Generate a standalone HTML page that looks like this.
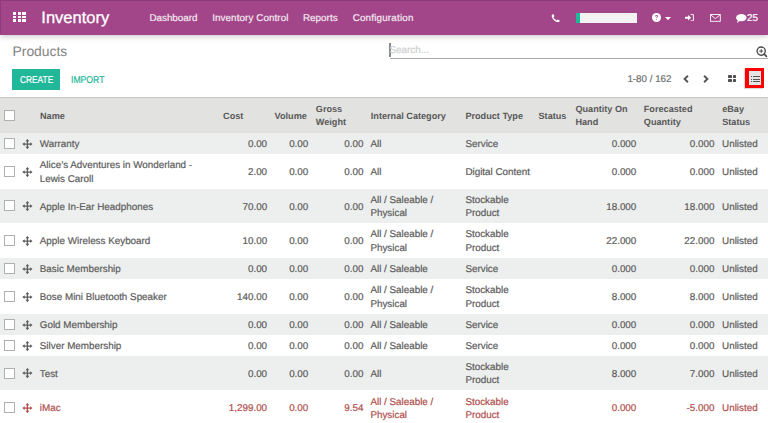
<!DOCTYPE html>
<html><head><meta charset="utf-8"><style>
html,body{margin:0;padding:0;}
body{width:768px;height:423px;overflow:hidden;position:relative;background:#fff;font-family:"Liberation Sans", sans-serif;}
.t{position:absolute;white-space:nowrap;line-height:normal;text-rendering:geometricPrecision;-webkit-text-stroke:0.2px currentColor;}
.r{position:absolute;}
.cb{width:9px;height:9px;border:1px solid #b0b0b0;background:#fff;}
</style></head><body>
<div class="r" style="left:0px;top:0px;width:768.00px;height:34.60px;background:#a24689;box-shadow:0 1px 6px rgba(0,0,0,0.24);"></div>
<div class="r" style="left:0px;top:0px;width:768.00px;height:1.00px;background:#8e3b78;"></div>
<div class="r" style="left:0px;top:0px;width:1.00px;height:34.00px;background:#8e3b78;"></div>
<div class="r" style="left:12.8px;top:11.8px;width:3.70px;height:2.90px;background:#fff;"></div>
<div class="r" style="left:12.8px;top:15.5px;width:3.70px;height:2.90px;background:#fff;"></div>
<div class="r" style="left:12.8px;top:19.2px;width:3.70px;height:2.90px;background:#fff;"></div>
<div class="r" style="left:17.6px;top:11.8px;width:3.70px;height:2.90px;background:#fff;"></div>
<div class="r" style="left:17.6px;top:15.5px;width:3.70px;height:2.90px;background:#fff;"></div>
<div class="r" style="left:17.6px;top:19.2px;width:3.70px;height:2.90px;background:#fff;"></div>
<div class="r" style="left:22.4px;top:11.8px;width:3.70px;height:2.90px;background:#fff;"></div>
<div class="r" style="left:22.4px;top:15.5px;width:3.70px;height:2.90px;background:#fff;"></div>
<div class="r" style="left:22.4px;top:19.2px;width:3.70px;height:2.90px;background:#fff;"></div>
<div class="t" style="left:41.30px;top:9px;font-size:16.5px;color:#fff;-webkit-text-stroke:0.3px #fff;">Inventory</div>
<div class="t" style="left:149.50px;top:13px;font-size:9.8px;color:#f4e8f1;letter-spacing:-0.01px;">Dashboard</div>
<div class="t" style="left:212.20px;top:13px;font-size:9.8px;color:#f4e8f1;letter-spacing:0.1px;">Inventory Control</div>
<div class="t" style="left:303.00px;top:13px;font-size:9.8px;color:#f4e8f1;letter-spacing:0.05px;">Reports</div>
<div class="t" style="left:352.70px;top:13px;font-size:9.8px;color:#f4e8f1;letter-spacing:0.2px;">Configuration</div>
<svg class="r" style="left:551px;top:14px;" width="9" height="8.5" viewBox="0 0 16 16"><path fill="#fff" d="M15.6 12.3c-.1-.4-2.6-1.9-3-2-.4-.1-.8 0-1.1.3l-.9 1.1c-.3.3-.7.3-1 .1C8 11 5.1 8.1 4.3 6.5c-.2-.3-.1-.7.1-1L5.5 4.6c.3-.3.4-.7.3-1.1C5.7 3.1 4.2.6 3.8.5 3.3.3 2.2.6 1.9.9 1.1 1.7.1 3.6 1.7 7c1.6 3.3 4.3 6 7.6 7.4 3.4 1.5 5.3.6 6.1-.3.3-.3.4-1.4.2-1.8z"/></svg>
<div class="r" style="left:576.3px;top:13px;width:3.50px;height:10.00px;background:#21b799;"></div>
<div class="r" style="left:579.8px;top:13px;width:57.20px;height:10.00px;background:#f2f2f2;"></div>
<svg class="r" style="left:651.8px;top:13.3px;" width="9" height="9" viewBox="0 0 16 16"><circle cx="8" cy="8" r="8" fill="#fff"/><path fill="#a24689" d="M5.6 6.1c0-1.5 1.1-2.4 2.5-2.4 1.5 0 2.5.9 2.5 2.1 0 1-.6 1.5-1.2 1.9-.5.3-.6.5-.6.9v.3H7.4v-.4c0-.8.3-1.2.9-1.6.5-.3.8-.5.8-1 0-.5-.4-.8-.9-.8-.6 0-1 .4-1 1H5.6zM7.3 10.6h1.6v1.6H7.3z"/></svg>
<svg class="r" style="left:664.8px;top:16.9px;" width="6" height="3.2" viewBox="0 0 6 3.2"><path fill="#fff" d="M0 0h6L3 3.2z"/></svg>
<svg class="r" style="left:685.2px;top:13.8px;" width="9.2" height="7.4" viewBox="0 0 18 14"><path fill="#fff" d="M0 5h6V1.5L12 7l-6 5.5V9H0z"/><path fill="none" stroke="#fff" stroke-width="1.8" d="M11 .9h5.5v12.2H11"/></svg>
<svg class="r" style="left:709.9px;top:14.2px;" width="10.8" height="7.8" viewBox="0 0 22 16"><rect x="1" y="1" width="20" height="14" fill="none" stroke="#fff" stroke-width="1.8"/><path d="M1.5 2L11 9.5 20.5 2" fill="none" stroke="#fff" stroke-width="1.8"/></svg>
<svg class="r" style="left:736.4px;top:13.6px;" width="10.6" height="9.2" viewBox="0 0 20 17"><ellipse cx="10" cy="6.7" rx="10" ry="6.7" fill="#fff"/><path fill="#fff" d="M3.5 10.5L2 17l6-5z"/></svg>
<div class="t" style="left:747.00px;top:13px;font-size:9.9px;color:#fff;">25</div>
<div class="t" style="left:12.50px;top:43px;font-size:13.9px;color:#838383;-webkit-text-stroke:0;">Products</div>
<div class="r" style="left:389px;top:43px;width:2.00px;height:13.50px;background:#8a8a8a;"></div>
<div class="t" style="left:389.50px;top:45px;font-size:9.9px;color:#cfcfcf;">Search...</div>
<div class="r" style="left:389.5px;top:58px;width:378.00px;height:1.00px;background:#a8a8a8;"></div>
<svg class="r" style="left:755.5px;top:45.5px;" width="12.5" height="12.5" viewBox="0 0 25 25"><circle cx="10.4" cy="10.2" r="8.2" fill="none" stroke="#484848" stroke-width="2.7"/><path d="M16.2 16L20.9 20.7" stroke="#484848" stroke-width="3.4" stroke-linecap="round"/><path d="M10.4 6.3v7.8M6.5 10.2h7.8" stroke="#484848" stroke-width="1.9"/></svg>
<div class="r" style="left:12px;top:68.5px;width:48.00px;height:21.00px;background:#21b799;"></div>
<div class="t" style="left:19.6px;top:75px;font-size:9.9px;color:#fff;transform:scaleX(0.845);transform-origin:0 0;">CREATE</div>
<div class="t" style="left:70.8px;top:75px;font-size:9.9px;color:#21b799;transform:scaleX(0.875);transform-origin:0 0;">IMPORT</div>
<div class="t" style="left:627.40px;top:74px;font-size:9.8px;color:#707070;">1-80 / 162</div>
<svg class="r" style="left:682.5px;top:74.8px;" width="6" height="8" viewBox="0 0 6 8"><path d="M4.9 .8L1.6 4l3.3 3.2" fill="none" stroke="#555" stroke-width="1.9"/></svg>
<svg class="r" style="left:702.5px;top:74.8px;" width="6" height="8" viewBox="0 0 6 8"><path d="M1.1 .8L4.4 4 1.1 7.2" fill="none" stroke="#555" stroke-width="1.9"/></svg>
<div class="r" style="left:727.7px;top:75px;width:3.90px;height:3.20px;background:#505050;border-radius:0.4px;"></div>
<div class="r" style="left:727.7px;top:78.9px;width:3.90px;height:3.20px;background:#505050;border-radius:0.4px;"></div>
<div class="r" style="left:732.6px;top:75px;width:3.90px;height:3.20px;background:#505050;border-radius:0.4px;"></div>
<div class="r" style="left:732.6px;top:78.9px;width:3.90px;height:3.20px;background:#505050;border-radius:0.4px;"></div>
<div class="r" style="left:745.2px;top:67.8px;width:19.20px;height:20.20px;background:#ff0000;box-shadow:-1px 1px 1px rgba(0,0,0,0.15);"></div>
<div class="r" style="left:749px;top:71.1px;width:12.00px;height:13.50px;background:#e4e4e4;"></div>
<div class="r" style="left:750.5px;top:75.6px;width:1.50px;height:1.20px;background:#555;"></div>
<div class="r" style="left:753px;top:75.6px;width:6.80px;height:1.20px;background:#555;"></div>
<div class="r" style="left:750.5px;top:78.5px;width:1.50px;height:1.20px;background:#555;"></div>
<div class="r" style="left:753px;top:78.5px;width:6.80px;height:1.20px;background:#555;"></div>
<div class="r" style="left:750.5px;top:81.3px;width:1.50px;height:1.20px;background:#555;"></div>
<div class="r" style="left:753px;top:81.3px;width:6.80px;height:1.20px;background:#555;"></div>
<div class="r" style="left:0px;top:97px;width:768.00px;height:1.00px;background:#c8c8c8;"></div>
<div class="r" style="left:0px;top:98px;width:768.00px;height:35.00px;background:#e2e2e0;"></div>
<div class="r cb" style="left:4px;top:110.00px"></div>
<div class="t" style="left:40.00px;top:111px;font-size:9.15px;color:#585858;font-weight:700;-webkit-text-stroke:0;">Name</div>
<div class="t" style="left:223.10px;top:111px;font-size:9.15px;color:#585858;font-weight:700;-webkit-text-stroke:0;">Cost</div>
<div class="t" style="left:274.60px;top:111px;font-size:9.15px;color:#585858;font-weight:700;-webkit-text-stroke:0;">Volume</div>
<div class="t" style="left:315.80px;top:104px;font-size:9.15px;color:#585858;font-weight:700;-webkit-text-stroke:0;">Gross</div>
<div class="t" style="left:315.80px;top:117px;font-size:9.15px;color:#585858;font-weight:700;-webkit-text-stroke:0;">Weight</div>
<div class="t" style="left:370.80px;top:111px;font-size:9.15px;color:#585858;font-weight:700;-webkit-text-stroke:0;">Internal Category</div>
<div class="t" style="left:465.40px;top:111px;font-size:9.15px;color:#585858;font-weight:700;-webkit-text-stroke:0;">Product Type</div>
<div class="t" style="left:538.50px;top:111px;font-size:9.15px;color:#585858;font-weight:700;-webkit-text-stroke:0;">Status</div>
<div class="t" style="left:575.40px;top:104px;font-size:9.15px;color:#585858;font-weight:700;-webkit-text-stroke:0;">Quantity On</div>
<div class="t" style="left:575.40px;top:117px;font-size:9.15px;color:#585858;font-weight:700;-webkit-text-stroke:0;">Hand</div>
<div class="t" style="left:643.80px;top:104px;font-size:9.15px;color:#585858;font-weight:700;-webkit-text-stroke:0;">Forecasted</div>
<div class="t" style="left:643.80px;top:117px;font-size:9.15px;color:#585858;font-weight:700;-webkit-text-stroke:0;">Quantity</div>
<div class="t" style="left:722.20px;top:104px;font-size:9.15px;color:#585858;font-weight:700;-webkit-text-stroke:0;">eBay</div>
<div class="t" style="left:722.20px;top:117px;font-size:9.15px;color:#585858;font-weight:700;-webkit-text-stroke:0;">Status</div>
<div class="r" style="left:0px;top:133px;width:768.00px;height:20.90px;background:#edefee;"></div>
<div class="r cb" style="left:4px;top:138.00px"></div>
<svg class="r" style="left:22.0px;top:138.8px;" width="10.8" height="10.2" viewBox="0 0 20 20"><path fill="#5c5c5c" d="M10 0L13.8 4.6H11.3V8.7H15.4V6.2L20 10 15.4 13.8V11.3H11.3V15.4H13.8L10 20 6.2 15.4H8.7V11.3H4.6V13.8L0 10 4.6 6.2V8.7H8.7V4.6H6.2z"/></svg>
<div class="t" style="left:39.80px;top:139px;font-size:9.85px;color:#5c5c5c;">Warranty</div>
<div class="t" style="right:500.90px;top:139px;font-size:9.85px;color:#5c5c5c;">0.00</div>
<div class="t" style="right:459.70px;top:139px;font-size:9.85px;color:#5c5c5c;">0.00</div>
<div class="t" style="right:404.50px;top:139px;font-size:9.85px;color:#5c5c5c;">0.00</div>
<div class="t" style="left:370.40px;top:139px;font-size:9.85px;color:#5c5c5c;">All</div>
<div class="t" style="left:465.40px;top:139px;font-size:9.85px;color:#5c5c5c;">Service</div>
<div class="t" style="right:131.70px;top:139px;font-size:9.85px;color:#5c5c5c;">0.000</div>
<div class="t" style="right:53.60px;top:139px;font-size:9.85px;color:#5c5c5c;">0.000</div>
<div class="t" style="left:722.10px;top:139px;font-size:9.85px;color:#5c5c5c;">Unlisted</div>
<div class="r cb" style="left:4px;top:166.00px"></div>
<svg class="r" style="left:22.0px;top:166.7px;" width="10.8" height="10.2" viewBox="0 0 20 20"><path fill="#5c5c5c" d="M10 0L13.8 4.6H11.3V8.7H15.4V6.2L20 10 15.4 13.8V11.3H11.3V15.4H13.8L10 20 6.2 15.4H8.7V11.3H4.6V13.8L0 10 4.6 6.2V8.7H8.7V4.6H6.2z"/></svg>
<div class="t" style="left:39.80px;top:160px;font-size:9.85px;color:#5c5c5c;">Alice’s Adventures in Wonderland -</div>
<div class="t" style="left:39.80px;top:174px;font-size:9.85px;color:#5c5c5c;">Lewis Caroll</div>
<div class="t" style="right:500.90px;top:167px;font-size:9.85px;color:#5c5c5c;">2.00</div>
<div class="t" style="right:459.70px;top:167px;font-size:9.85px;color:#5c5c5c;">0.00</div>
<div class="t" style="right:404.50px;top:167px;font-size:9.85px;color:#5c5c5c;">0.00</div>
<div class="t" style="left:370.40px;top:167px;font-size:9.85px;color:#5c5c5c;">All</div>
<div class="t" style="left:465.40px;top:167px;font-size:9.85px;color:#5c5c5c;">Digital Content</div>
<div class="t" style="right:131.70px;top:167px;font-size:9.85px;color:#5c5c5c;">0.000</div>
<div class="t" style="right:53.60px;top:167px;font-size:9.85px;color:#5c5c5c;">0.000</div>
<div class="t" style="left:722.10px;top:167px;font-size:9.85px;color:#5c5c5c;">Unlisted</div>
<div class="r" style="left:0px;top:188.6px;width:768.00px;height:34.40px;background:#edefee;"></div>
<div class="r cb" style="left:4px;top:200.00px"></div>
<svg class="r" style="left:22.0px;top:201.2px;" width="10.8" height="10.2" viewBox="0 0 20 20"><path fill="#5c5c5c" d="M10 0L13.8 4.6H11.3V8.7H15.4V6.2L20 10 15.4 13.8V11.3H11.3V15.4H13.8L10 20 6.2 15.4H8.7V11.3H4.6V13.8L0 10 4.6 6.2V8.7H8.7V4.6H6.2z"/></svg>
<div class="t" style="left:39.80px;top:202px;font-size:9.85px;color:#5c5c5c;">Apple In-Ear Headphones</div>
<div class="t" style="right:500.90px;top:202px;font-size:9.85px;color:#5c5c5c;">70.00</div>
<div class="t" style="right:459.70px;top:202px;font-size:9.85px;color:#5c5c5c;">0.00</div>
<div class="t" style="right:404.50px;top:202px;font-size:9.85px;color:#5c5c5c;">0.00</div>
<div class="t" style="left:370.40px;top:195px;font-size:9.85px;color:#5c5c5c;">All / Saleable /</div>
<div class="t" style="left:370.40px;top:208px;font-size:9.85px;color:#5c5c5c;">Physical</div>
<div class="t" style="left:465.40px;top:195px;font-size:9.85px;color:#5c5c5c;">Stockable</div>
<div class="t" style="left:465.40px;top:208px;font-size:9.85px;color:#5c5c5c;">Product</div>
<div class="t" style="right:131.70px;top:202px;font-size:9.85px;color:#5c5c5c;">18.000</div>
<div class="t" style="right:53.60px;top:202px;font-size:9.85px;color:#5c5c5c;">18.000</div>
<div class="t" style="left:722.10px;top:202px;font-size:9.85px;color:#5c5c5c;">Unlisted</div>
<div class="r cb" style="left:4px;top:235.00px"></div>
<svg class="r" style="left:22.0px;top:235.8px;" width="10.8" height="10.2" viewBox="0 0 20 20"><path fill="#5c5c5c" d="M10 0L13.8 4.6H11.3V8.7H15.4V6.2L20 10 15.4 13.8V11.3H11.3V15.4H13.8L10 20 6.2 15.4H8.7V11.3H4.6V13.8L0 10 4.6 6.2V8.7H8.7V4.6H6.2z"/></svg>
<div class="t" style="left:39.80px;top:236px;font-size:9.85px;color:#5c5c5c;">Apple Wireless Keyboard</div>
<div class="t" style="right:500.90px;top:236px;font-size:9.85px;color:#5c5c5c;">10.00</div>
<div class="t" style="right:459.70px;top:236px;font-size:9.85px;color:#5c5c5c;">0.00</div>
<div class="t" style="right:404.50px;top:236px;font-size:9.85px;color:#5c5c5c;">0.00</div>
<div class="t" style="left:370.40px;top:229px;font-size:9.85px;color:#5c5c5c;">All / Saleable /</div>
<div class="t" style="left:370.40px;top:243px;font-size:9.85px;color:#5c5c5c;">Physical</div>
<div class="t" style="left:465.40px;top:229px;font-size:9.85px;color:#5c5c5c;">Stockable</div>
<div class="t" style="left:465.40px;top:243px;font-size:9.85px;color:#5c5c5c;">Product</div>
<div class="t" style="right:131.70px;top:236px;font-size:9.85px;color:#5c5c5c;">22.000</div>
<div class="t" style="right:53.60px;top:236px;font-size:9.85px;color:#5c5c5c;">22.000</div>
<div class="t" style="left:722.10px;top:236px;font-size:9.85px;color:#5c5c5c;">Unlisted</div>
<div class="r" style="left:0px;top:257.7px;width:768.00px;height:21.10px;background:#edefee;"></div>
<div class="r cb" style="left:4px;top:263.00px"></div>
<svg class="r" style="left:22.0px;top:263.6px;" width="10.8" height="10.2" viewBox="0 0 20 20"><path fill="#5c5c5c" d="M10 0L13.8 4.6H11.3V8.7H15.4V6.2L20 10 15.4 13.8V11.3H11.3V15.4H13.8L10 20 6.2 15.4H8.7V11.3H4.6V13.8L0 10 4.6 6.2V8.7H8.7V4.6H6.2z"/></svg>
<div class="t" style="left:39.80px;top:264px;font-size:9.85px;color:#5c5c5c;">Basic Membership</div>
<div class="t" style="right:500.90px;top:264px;font-size:9.85px;color:#5c5c5c;">0.00</div>
<div class="t" style="right:459.70px;top:264px;font-size:9.85px;color:#5c5c5c;">0.00</div>
<div class="t" style="right:404.50px;top:264px;font-size:9.85px;color:#5c5c5c;">0.00</div>
<div class="t" style="left:370.40px;top:264px;font-size:9.85px;color:#5c5c5c;">All / Saleable</div>
<div class="t" style="left:465.40px;top:264px;font-size:9.85px;color:#5c5c5c;">Service</div>
<div class="t" style="right:131.70px;top:264px;font-size:9.85px;color:#5c5c5c;">0.000</div>
<div class="t" style="right:53.60px;top:264px;font-size:9.85px;color:#5c5c5c;">0.000</div>
<div class="t" style="left:722.10px;top:264px;font-size:9.85px;color:#5c5c5c;">Unlisted</div>
<div class="r cb" style="left:4px;top:291.00px"></div>
<svg class="r" style="left:22.0px;top:291.6px;" width="10.8" height="10.2" viewBox="0 0 20 20"><path fill="#5c5c5c" d="M10 0L13.8 4.6H11.3V8.7H15.4V6.2L20 10 15.4 13.8V11.3H11.3V15.4H13.8L10 20 6.2 15.4H8.7V11.3H4.6V13.8L0 10 4.6 6.2V8.7H8.7V4.6H6.2z"/></svg>
<div class="t" style="left:39.80px;top:292px;font-size:9.85px;color:#5c5c5c;">Bose Mini Bluetooth Speaker</div>
<div class="t" style="right:500.90px;top:292px;font-size:9.85px;color:#5c5c5c;">140.00</div>
<div class="t" style="right:459.70px;top:292px;font-size:9.85px;color:#5c5c5c;">0.00</div>
<div class="t" style="right:404.50px;top:292px;font-size:9.85px;color:#5c5c5c;">0.00</div>
<div class="t" style="left:370.40px;top:285px;font-size:9.85px;color:#5c5c5c;">All / Saleable /</div>
<div class="t" style="left:370.40px;top:299px;font-size:9.85px;color:#5c5c5c;">Physical</div>
<div class="t" style="left:465.40px;top:285px;font-size:9.85px;color:#5c5c5c;">Stockable</div>
<div class="t" style="left:465.40px;top:299px;font-size:9.85px;color:#5c5c5c;">Product</div>
<div class="t" style="right:131.70px;top:292px;font-size:9.85px;color:#5c5c5c;">8.000</div>
<div class="t" style="right:53.60px;top:292px;font-size:9.85px;color:#5c5c5c;">8.000</div>
<div class="t" style="left:722.10px;top:292px;font-size:9.85px;color:#5c5c5c;">Unlisted</div>
<div class="r" style="left:0px;top:313.6px;width:768.00px;height:21.10px;background:#edefee;"></div>
<div class="r cb" style="left:4px;top:319.00px"></div>
<svg class="r" style="left:22.0px;top:319.5px;" width="10.8" height="10.2" viewBox="0 0 20 20"><path fill="#5c5c5c" d="M10 0L13.8 4.6H11.3V8.7H15.4V6.2L20 10 15.4 13.8V11.3H11.3V15.4H13.8L10 20 6.2 15.4H8.7V11.3H4.6V13.8L0 10 4.6 6.2V8.7H8.7V4.6H6.2z"/></svg>
<div class="t" style="left:39.80px;top:320px;font-size:9.85px;color:#5c5c5c;">Gold Membership</div>
<div class="t" style="right:500.90px;top:320px;font-size:9.85px;color:#5c5c5c;">0.00</div>
<div class="t" style="right:459.70px;top:320px;font-size:9.85px;color:#5c5c5c;">0.00</div>
<div class="t" style="right:404.50px;top:320px;font-size:9.85px;color:#5c5c5c;">0.00</div>
<div class="t" style="left:370.40px;top:320px;font-size:9.85px;color:#5c5c5c;">All / Saleable</div>
<div class="t" style="left:465.40px;top:320px;font-size:9.85px;color:#5c5c5c;">Service</div>
<div class="t" style="right:131.70px;top:320px;font-size:9.85px;color:#5c5c5c;">0.000</div>
<div class="t" style="right:53.60px;top:320px;font-size:9.85px;color:#5c5c5c;">0.000</div>
<div class="t" style="left:722.10px;top:320px;font-size:9.85px;color:#5c5c5c;">Unlisted</div>
<div class="r cb" style="left:4px;top:340.00px"></div>
<svg class="r" style="left:22.0px;top:340.6px;" width="10.8" height="10.2" viewBox="0 0 20 20"><path fill="#5c5c5c" d="M10 0L13.8 4.6H11.3V8.7H15.4V6.2L20 10 15.4 13.8V11.3H11.3V15.4H13.8L10 20 6.2 15.4H8.7V11.3H4.6V13.8L0 10 4.6 6.2V8.7H8.7V4.6H6.2z"/></svg>
<div class="t" style="left:39.80px;top:341px;font-size:9.85px;color:#5c5c5c;">Silver Membership</div>
<div class="t" style="right:500.90px;top:341px;font-size:9.85px;color:#5c5c5c;">0.00</div>
<div class="t" style="right:459.70px;top:341px;font-size:9.85px;color:#5c5c5c;">0.00</div>
<div class="t" style="right:404.50px;top:341px;font-size:9.85px;color:#5c5c5c;">0.00</div>
<div class="t" style="left:370.40px;top:341px;font-size:9.85px;color:#5c5c5c;">All / Saleable</div>
<div class="t" style="left:465.40px;top:341px;font-size:9.85px;color:#5c5c5c;">Service</div>
<div class="t" style="right:131.70px;top:341px;font-size:9.85px;color:#5c5c5c;">0.000</div>
<div class="t" style="right:53.60px;top:341px;font-size:9.85px;color:#5c5c5c;">0.000</div>
<div class="t" style="left:722.10px;top:341px;font-size:9.85px;color:#5c5c5c;">Unlisted</div>
<div class="r" style="left:0px;top:355.7px;width:768.00px;height:34.70px;background:#edefee;"></div>
<div class="r cb" style="left:4px;top:368.00px"></div>
<svg class="r" style="left:22.0px;top:368.4px;" width="10.8" height="10.2" viewBox="0 0 20 20"><path fill="#5c5c5c" d="M10 0L13.8 4.6H11.3V8.7H15.4V6.2L20 10 15.4 13.8V11.3H11.3V15.4H13.8L10 20 6.2 15.4H8.7V11.3H4.6V13.8L0 10 4.6 6.2V8.7H8.7V4.6H6.2z"/></svg>
<div class="t" style="left:39.80px;top:369px;font-size:9.85px;color:#5c5c5c;">Test</div>
<div class="t" style="right:500.90px;top:369px;font-size:9.85px;color:#5c5c5c;">0.00</div>
<div class="t" style="right:459.70px;top:369px;font-size:9.85px;color:#5c5c5c;">0.00</div>
<div class="t" style="right:404.50px;top:369px;font-size:9.85px;color:#5c5c5c;">0.00</div>
<div class="t" style="left:370.40px;top:369px;font-size:9.85px;color:#5c5c5c;">All</div>
<div class="t" style="left:465.40px;top:362px;font-size:9.85px;color:#5c5c5c;">Stockable</div>
<div class="t" style="left:465.40px;top:375px;font-size:9.85px;color:#5c5c5c;">Product</div>
<div class="t" style="right:131.70px;top:369px;font-size:9.85px;color:#5c5c5c;">8.000</div>
<div class="t" style="right:53.60px;top:369px;font-size:9.85px;color:#5c5c5c;">7.000</div>
<div class="t" style="left:722.10px;top:369px;font-size:9.85px;color:#5c5c5c;">Unlisted</div>
<div class="r cb" style="left:4px;top:402.00px"></div>
<svg class="r" style="left:22.0px;top:403.1px;" width="10.8" height="10.2" viewBox="0 0 20 20"><path fill="#b04f4d" d="M10 0L13.8 4.6H11.3V8.7H15.4V6.2L20 10 15.4 13.8V11.3H11.3V15.4H13.8L10 20 6.2 15.4H8.7V11.3H4.6V13.8L0 10 4.6 6.2V8.7H8.7V4.6H6.2z"/></svg>
<div class="t" style="left:39.80px;top:403px;font-size:9.85px;color:#b04f4d;">iMac</div>
<div class="t" style="right:500.90px;top:403px;font-size:9.85px;color:#b04f4d;">1,299.00</div>
<div class="t" style="right:459.70px;top:403px;font-size:9.85px;color:#b04f4d;">0.00</div>
<div class="t" style="right:404.50px;top:403px;font-size:9.85px;color:#b04f4d;">9.54</div>
<div class="t" style="left:370.40px;top:397px;font-size:9.85px;color:#b04f4d;">All / Saleable /</div>
<div class="t" style="left:370.40px;top:410px;font-size:9.85px;color:#b04f4d;">Physical</div>
<div class="t" style="left:465.40px;top:397px;font-size:9.85px;color:#b04f4d;">Stockable</div>
<div class="t" style="left:465.40px;top:410px;font-size:9.85px;color:#b04f4d;">Product</div>
<div class="t" style="right:131.70px;top:403px;font-size:9.85px;color:#b04f4d;">0.000</div>
<div class="t" style="right:53.60px;top:403px;font-size:9.85px;color:#b04f4d;">-5.000</div>
<div class="t" style="left:722.10px;top:403px;font-size:9.85px;color:#b04f4d;">Unlisted</div>
</body></html>
